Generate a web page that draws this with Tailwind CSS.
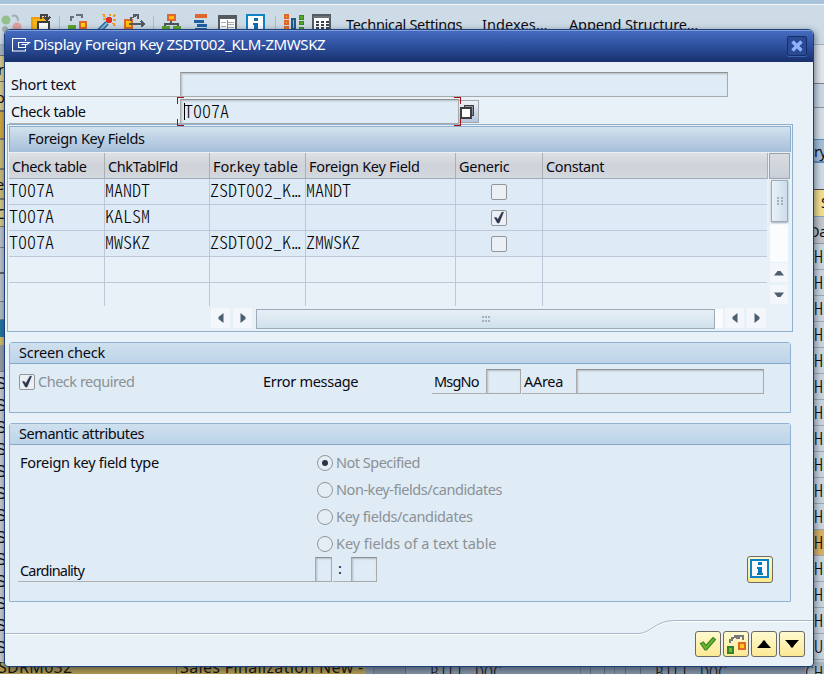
<!DOCTYPE html>
<html lang="en">
<head>
<meta charset="utf-8">
<title>Display Foreign Key ZSDT002_KLM-ZMWSKZ</title>
<script src="https://cdn.jsdelivr.net/npm/@tailwindcss/browser@4"></script>
</head>
<body class="relative h-[674px] w-[824px] overflow-hidden bg-[#c5d0da] font-['Noto_Sans',sans-serif] text-[14.5px] leading-[20px] tracking-[-0.3px] text-[#0a0a12]">

<!-- main window behind the dialog -->
<div class="flex h-[674px] flex-col overflow-hidden">
  <div class="h-1 shrink-0 bg-[#a9c3db]"></div>
  <div class="h-px shrink-0 bg-[#f4f8fb]"></div>
  <div class="flex h-[40px] shrink-0 items-start border-b border-[#9fb0bf] bg-[#cddbe6] pt-[9px]">
    <svg class="shrink-0" width="340" height="18" viewBox="0 14 340 18" shape-rendering="crispEdges">
      <g shape-rendering="auto"><circle cx="6" cy="20" r="4.5" fill="#93c08c"/><circle cx="17" cy="27" r="4.5" fill="#e0a09b"/><circle cx="5" cy="29" r="3" fill="#a3adb3"/><path d="M12 16q6-2 6 5" fill="none" stroke="#a3adb3" stroke-width="2"/></g>
      <rect x="31" y="17" width="16" height="16" fill="#f6b716"/><path d="M31 17h13v2h-11v12h-2z" fill="#ee9d12"/><rect x="38" y="22" width="11" height="10" fill="#fff" stroke="#3d3d3d" stroke-width="2"/><path d="M41 19v-4h6v4m-3-2l3 3 3-3" fill="none" stroke="#444" stroke-width="1.5"/>
      <path d="M59 16v16" stroke="#a6bccd"/>
      <g><rect x="68" y="25" width="8" height="8" fill="#5aa52a"/><path d="M71 21v-4h3m2-2h6v3" fill="none" stroke="#67717a" stroke-width="2"/><rect x="80" y="22" width="6" height="6" fill="#fdd20a" stroke="#e0662a" stroke-width="2"/></g>
      <path d="M99 31l8-8" stroke="#24699a" stroke-width="5" shape-rendering="auto"/><path d="M100 30l7-7" stroke="#86b7d6" stroke-width="2" shape-rendering="auto"/><circle cx="109" cy="20" r="3" fill="#e02b26"/><path d="M103 14l2 3m5-3v2m5-1l-2 2m0 3h3m-3 3l2 3m-12-7h3" stroke="#f29a1e" stroke-width="2"/>
      <rect x="125" y="20" width="7" height="8" fill="#fdc50a" stroke="#e0662a" stroke-width="2"/><path d="M129 24h14M131 21v-3l5-2m-3-1h5v4m3 2l3 3-3 3" fill="none" stroke="#555a60" stroke-width="1.600"/>
      <path d="M153 16v16" stroke="#a6bccd"/>
      <rect x="168" y="15" width="7" height="5" fill="#fdb81a" stroke="#e0662a" stroke-width="2"/><path d="M171 21v3m-6 2v-2h13v2" fill="none" stroke="#4e555a" stroke-width="2"/><rect x="162" y="26" width="8" height="5" fill="#5aa52a"/><rect x="173" y="26" width="8" height="5" fill="#5aa52a"/>
      <rect x="195" y="14" width="12" height="4" fill="#e0662a"/><path d="M194 21h10m-7 4h10m-12 4h12" stroke="#1f5fa0" stroke-width="3"/>
      <rect x="219" y="16" width="17" height="16" fill="#fff" stroke="#565b60" stroke-width="2"/><path d="M219 18h17" stroke="#565b60" stroke-width="2"/><path d="M221 22h5m2 0h6m-13 4h5m2-2h6m-6 3h6" stroke="#a9aeb3"/><path d="M227 20v12" stroke="#888"/>
      <rect x="247" y="15" width="17" height="18" fill="#fff" stroke="#0d83c4" stroke-width="2"/><path d="M254 18h4v3h-4zM253 23h5v8h-4v-6h-1z" fill="#0a6fb0"/>
      <path d="M275 16v16" stroke="#a6bccd"/>
      <path d="M285 15h3v3h-3zM285 21h3v3h-3zM285 27h3v3h-3z" fill="#fdc03a" stroke="#e0662a" stroke-width="2"/><rect x="292" y="19" width="3" height="10" fill="#79b8e6" stroke="#225b85" stroke-width="2"/><path d="M299 15h4v4h-4zM299 21h4v3h-4zM299 27h4v3h-4z" fill="#5aa52a" stroke="#3a8526"/>
      <rect x="313" y="15" width="17" height="18" fill="#fff" stroke="#565b60" stroke-width="2"/><path d="M313 17h17" stroke="#6b7278" stroke-width="2"/><path d="M317 21v10m5-10v10m5-10v10" stroke="#39444d" stroke-width="3" stroke-dasharray="2 1"/>
    </svg>
    <div class="flex gap-[20px] whitespace-nowrap pl-[6px] tracking-[-0.3px]">
      <span class="w-[116px]">Technical Settings</span><span class="w-[67px] tracking-[0.1px]">Indexes…</span><span class="tracking-[-0.15px]">Append Structure…</span>
    </div>
  </div>
  <div class="flex h-[617px] shrink-0 overflow-hidden">
    <!-- left edge of the main window -->
    <div class="flex h-full w-[400px] flex-col overflow-hidden">
      <div class="h-[10px] shrink-0 bg-[#aab6c2]"></div>
      <div class="h-[27px] shrink-0 border-y border-[#6f6f68] bg-[#d9ca8a] leading-[27px]"><span class="-ml-0.5">r</span></div>
      <div class="h-[30px] shrink-0 border-b-2 border-[#6f6f68] bg-[#d9ca8a] leading-[30px]"><span class="-ml-1">o</span></div>
      <div class="h-[28px] shrink-0 border-b-2 border-[#7a7768] bg-[#d3a93f]"></div>
      <div class="h-[30px] shrink-0 border-b-2 border-[#7a7768] bg-[#cdbc78]"></div>
      <div class="h-[30px] shrink-0 border-b-2 border-[#7a7768] bg-[#cdbc78] leading-[28px]"><span class="-ml-1">e</span></div>
      <div class="h-[27px] shrink-0 border-b border-[#7a7768] bg-[#d9ca8a] leading-[26px]"><span class="-ml-1">C</span></div>
      <div class="h-[21px] shrink-0 border-b border-[#777f88] bg-[#bcc3cb]"></div>
      <div class="h-[26px] shrink-0 border-b-2 border-[#5d646b] bg-[#bcc3cb]"></div>
      <div class="h-[28px] shrink-0 border-b border-[#777f88] bg-[#bcc3cb]"></div>
      <div class="h-[18px] shrink-0 border-b border-[#777f88] bg-[#b4bdc6]"></div>
      <div class="h-[17px] shrink-0 bg-[#23749f]"></div>
      <div class="h-[8px] shrink-0 bg-[#d3bd62]"></div>
      <div class="h-[27px] shrink-0 border-b border-[#777f88] bg-[#979da5]"></div>
      <div id="codes" class="flex h-[290px] shrink-0 flex-col overflow-hidden bg-[#c6cbd1] pt-px font-['Liberation_Sans',sans-serif]"></div>
    </div>
    <!-- right part of the main window -->
    <div class="flex h-full w-[424px] flex-col overflow-hidden whitespace-nowrap bg-[#c5d0da]">
      <div class="h-[39px] shrink-0 border-b border-[#7a8086] bg-[#dfe5ea]"></div>
      <div class="h-[24px] shrink-0 border-b border-[#8b9197] bg-[#c9d8e4]"></div>
      <div class="h-[31px] shrink-0 bg-[#d3dde5]"></div>
      <div class="h-[24px] shrink-0 border-b-2 border-t border-[#5f8db8] bg-[#a3bfd8] pl-[409px] leading-[23px]">try</div>
      <div class="h-[27px] shrink-0 border-b border-[#5a4a48] bg-[#cdd9e4]"></div>
      <div class="h-[27px] shrink-0 border-b border-[#7fa4c6] bg-[#f4dd8c] pl-[421px] leading-[24px]">S</div>
      <div class="h-[27px] shrink-0 border-b border-[#9098a2] bg-[#c2c5ca] pl-[409px] leading-[28px]">Da</div>
      <div id="types" class="flex flex-col"></div>
    </div>
  </div>
  <!-- last visible table line -->
  <div class="flex h-[12px] shrink-0 overflow-hidden whitespace-nowrap bg-[#8593a3] text-[#14120c]">
    <div class="w-[177px] shrink-0 border-r border-[#6d6032] bg-[#b39c50] text-[16px] leading-[11px] tracking-[0.3px]"><span class="-ml-0.5">SDRM032</span></div>
    <div class="w-[189px] shrink-0 bg-[#b39c50] pl-[3px] text-[16px] leading-[11px] tracking-[0.35px]">Sales Finalization New -</div>
    <div class="w-[8px] shrink-0 border-r border-[#6c7989]"></div><div class="w-[32px] shrink-0 border-r border-[#5f6c7c] bg-[#7e8b99]"></div>
    <div class="w-[175px] shrink-0 border-r border-[#6c7989] pl-[24px] font-['Noto_Sans_CJK_KR',sans-serif] text-[18px] font-light leading-[18px] tracking-[0] [font-feature-settings:'hwid']">BILL_DOC</div>
    <div class="w-[10px] shrink-0 border-r border-[#5f6c7c]"></div><div class="w-[14px] shrink-0 border-r border-[#5f6c7c]"></div><div class="w-[10px] shrink-0 border-r border-[#6c7989]"></div><div class="w-[11px] shrink-0 border-r border-[#5f6c7c]"></div><div class="w-[15px] shrink-0 border-r border-[#5f6c7c]"></div>
    <div class="w-[164px] shrink-0 pl-[14px] font-['Noto_Sans_CJK_KR',sans-serif] text-[18px] font-light leading-[18px] tracking-[0] [font-feature-settings:'hwid']">BILL_DOC</div>
    <div class="grow bg-[#aab6c3] font-['Noto_Sans_CJK_KR',sans-serif] text-[18px] font-light leading-[18px] tracking-[0] [font-feature-settings:'hwid']">CH</div>
  </div>
</div>

<!-- dialog -->
<div class="absolute left-[4px] top-[29px] flex h-[638px] w-[810px] flex-col overflow-hidden rounded-[6px] rounded-b-[4px] border border-[#1f3f7c] bg-[#e8f0f8] shadow-[1px_2px_7px_rgba(20,35,60,0.6)]">
  <div class="flex h-[32px] shrink-0 items-center border-t border-[#7f9fd8] bg-linear-to-b from-[#456ac0] via-[#2d4f9c] to-[#17306c] pl-[7px] pr-[6px]">
    <svg class="mb-[4px]" width="19" height="14" viewBox="0 0 19 14" fill="none" stroke="#fff" stroke-width="1.1"><path d="M13.500 3V.5H.5v12.500h13V11"/><path d="M6.500 4.500H17.500L15 6.500H13.500V9.500H6.500zM9.500 6.500H13.500"/></svg>
    <span class="mb-[5px] ml-[2px] grow text-[15px] tracking-[-0.4px] text-white">Display Foreign Key ZSDT002_KLM-ZMWSKZ</span>
    <div class="mb-[2px] flex size-[20px] items-center justify-center rounded-[2px] border border-[#122f6b] bg-[#2a4a94] shadow-[0_1px_0_#4163b4]">
      <svg class="shrink-0" width="12" height="12" viewBox="0 0 12 12"><path d="M1.500 1.500l9 9M10.500 1.500l-9 9" stroke="#8fb2ff" stroke-width="3.400"/></svg>
    </div>
  </div>

  <!-- table identification -->
  <div class="mt-[10px] flex h-[25px] shrink-0 pl-[4px]">
    <div class="w-[171px] border-b border-[#b0b0b0] pl-[2px] leading-[25px] tracking-[-0.2px]">Short text</div>
    <div class="h-[25px] w-[548px] border border-[#a9a9a9] border-t-[#909090] bg-[#dfecf5] shadow-[inset_1px_1px_2px_rgba(90,100,110,0.35)]"></div>
  </div>
  <div class="mt-[2px] flex h-[25px] shrink-0 pl-[4px]">
    <div class="w-[171px] border-b border-[#b0b0b0] pl-[2px] leading-[25px] tracking-[-0.4px]">Check table</div>
    <div class="relative h-[25px] w-[279px] border border-[#a9a9a9] border-t-[#909090] bg-[#dfecf5] pl-[3px] font-['Noto_Sans_CJK_KR',sans-serif] text-[18px] font-light leading-[21px] tracking-[0] text-black shadow-[inset_1px_1px_2px_rgba(90,100,110,0.35)] [font-feature-settings:'hwid']">
      <span>T007A</span>
      <span class="absolute left-[3px] top-[3px] h-[17px] w-px bg-black"></span>
      <svg class="absolute -left-[4px] -top-[3px] z-10" width="286" height="29" viewBox="0 0 286 29" fill="none" stroke="#a01018" shape-rendering="crispEdges"><path d="M6.500 .5H.5V7M.5 22V28.500H6.500M277 .5h6.500V7M283.500 22V28.500H277"/></svg>
    </div>
    <div class="mt-px flex h-[23px] w-[20px] items-center justify-start border border-l-0 border-[#a4a8ac] bg-linear-to-b from-[#eef3f8] to-[#b4c5de] pl-px">
      <svg width="14" height="14" viewBox="0 0 14 14" shape-rendering="crispEdges" fill="#fff" stroke="#3e3e3e"><path d="M4 2V.5H13.500V10H12" fill="none"/><path d="M4 1.500H12.500V10" stroke-opacity=".5" fill="none"/><rect x="1" y="3" width="10" height="10" stroke-width="2"/></svg>
    </div>
  </div>

  <!-- foreign key fields -->
  <div class="ml-[2px] h-[208px] w-[786px] shrink-0 border border-[#8fb0cc] pl-px pt-px">
    <div class="h-[26px] w-[782px] border border-b-0 border-[#8eaecb] bg-linear-to-b from-[#d3e2ee] to-[#a6bfd9] pl-[18px] leading-[22px] tracking-[-0.33px]">Foreign Key Fields</div>
    <div class="mt-px flex">
      <div class="w-[760px]">
        <div class="grid h-[26px] w-[759px] grid-cols-[96px_105px_96px_150px_87px_225px] border-b border-[#a3acb8] bg-linear-to-b from-[#dde1e3] via-[#cfd2d9] to-[#d3d8de] leading-[26px] *:whitespace-nowrap *:border-r *:border-[#a8b0b8] *:pl-[3px]">
          <div class="tracking-[-0.4px]">Check table</div><div class="tracking-[-0.4px]">ChkTablFld</div><div class="tracking-[0]">For.key table</div><div>Foreign Key Field</div><div>Generic</div><div class="tracking-[-0.4px]">Constant</div>
        </div>
        <div id="rows" class="h-[127px] overflow-hidden font-['Noto_Sans_CJK_KR',sans-serif] text-[18px] font-light tracking-[0] text-black [font-feature-settings:'hwid']"></div>
      </div>
      <div class="flex w-[22px] flex-col">
        <div class="h-[26px] w-[21px] border border-[#9ba4ad] bg-linear-to-b from-[#d9dde0] to-[#caced8]"></div>
        <div class="ml-px mt-px h-[82px] w-[18px] bg-[#fbfcfd]">
          <div class="ml-px flex h-[42px] items-center justify-center border border-[#9cabbb] bg-linear-to-r from-[#eaf2f9] to-[#cbdceb] shadow-[0_1px_2px_#9aa5b0]">
            <svg width="6" height="8" fill="#a3b0bd"><path d="M0 0h2v2H0zM4 0h2v2H4zM0 3h2v2H0zM4 3h2v2H4zM0 6h2v2H0zM4 6h2v2H4z"/></svg>
          </div>
        </div>
        <div class="ml-px mt-px flex h-[19px] w-[18px] items-center justify-center bg-[#f3f7fb]"><svg width="10" height="6"><path d="M0 5.500L3.500 1h3L10 5.500z" fill="#4c5f70"/></svg></div>
        <div class="ml-px mt-[3px] flex h-[19px] w-[18px] items-center justify-center bg-[#f3f7fb]"><svg width="10" height="6"><path d="M0 .5L3.500 5h3L10 .5z" fill="#4c5f70"/></svg></div>
      </div>
    </div>
    <div class="mt-[3px] flex h-[19px] pl-[202px]">
      <div class="-mt-px flex w-[19px] items-center justify-center bg-[#f3f7fb]"><svg width="6" height="10"><path d="M5.500 0L.5 4v2l5 4z" fill="#4c5f70"/></svg></div>
      <div class="-mt-px ml-[3px] flex w-[19px] items-center justify-center bg-[#f3f7fb]"><svg width="6" height="10"><path d="M.5 0l5 4v2l-5 4z" fill="#4c5f70"/></svg></div>
      <div class="ml-[4px] flex h-[20px] w-[459px] items-center justify-center border border-[#9cabbb] bg-linear-to-b from-[#e8eff6] to-[#d0e1ec]">
        <svg width="8" height="6" fill="#a3b0bd"><path d="M0 0h2v2H0zM3 0h2v2H3zM6 0h2v2H6zM0 4h2v2H0zM3 4h2v2H3zM6 4h2v2H6z"/></svg>
      </div>
      <div class="w-[8px] bg-[#fbfcfd]"></div>
      <div class="-mt-px ml-[2px] flex w-[19px] items-center justify-center bg-[#f3f7fb]"><svg width="6" height="10"><path d="M5.500 0L.5 4v2l5 4z" fill="#4c5f70"/></svg></div>
      <div class="-mt-px ml-[3px] flex w-[19px] items-center justify-center bg-[#f3f7fb]"><svg width="6" height="10"><path d="M.5 0l5 4v2l-5 4z" fill="#4c5f70"/></svg></div>
    </div>
  </div>

  <!-- screen check -->
  <div class="ml-[4px] mt-[10px] h-[71px] w-[782px] shrink-0 rounded-t-[3px] border border-[#92b1d0] bg-[#dfebf5]">
    <div class="h-[21px] border-b border-[#86a8c8] bg-linear-to-b from-[#cfe0ee] to-[#bcd4e9] pl-[9px] leading-[18px] tracking-[-0.2px]">Screen check</div>
    <div class="mt-[5px] flex h-[25px] items-stretch pl-[9px] leading-[25px]">
      <div class="mt-[5px] size-[16px] rounded-[2px] border-[1.5px] border-[#959595] bg-[#eaf0f6]"><svg class="-mt-px" width="14" height="14" viewBox="0 0 14 14"><path d="M2.500 7.500l2 .2 1.300 2L10 2.200h1.500L7 13H5.500z" fill="#2c3248" stroke="#2c3248" stroke-width=".6"/></svg></div>
      <span class="w-[225px] pl-[3px] tracking-[-0.48px] text-[#8c9196]">Check required</span>
      <span class="w-[172px] pl-[3px]">Error message</span>
      <span class="w-[54px] border-b border-[#b0b0b0] pl-[2px] tracking-[-0.8px]">MsgNo</span>
      <div class="w-[35px] border border-[#a9a9a9] border-t-[#909090] shadow-[inset_1px_1px_2px_rgba(90,100,110,0.35)]"></div>
      <span class="ml-px w-[54px] border-b border-[#b0b0b0] pl-[2px]">AArea</span>
      <div class="w-[188px] border border-[#a9a9a9] border-t-[#909090] shadow-[inset_1px_1px_2px_rgba(90,100,110,0.35)]"></div>
    </div>
  </div>

  <!-- semantic attributes -->
  <div class="ml-[4px] mt-[10px] h-[179px] w-[782px] shrink-0 rounded-t-[3px] border border-[#92b1d0] bg-[#dfebf5]">
    <div class="h-[21px] border-b border-[#86a8c8] bg-linear-to-b from-[#cfe0ee] to-[#bcd4e9] pl-[9px] leading-[18px] tracking-[-0.43px]">Semantic attributes</div>
    <div class="mt-[4px] flex h-[108px]">
      <div class="w-[307px] pl-[10px] leading-[27px]">Foreign key field type</div>
      <div id="options" class="flex flex-col text-[#8c9196]"></div>
    </div>
    <div class="flex items-start pl-[8px] leading-[26px]">
      <div class="h-[25px] w-[297px] border-b border-[#b0b0b0] pl-[2px] tracking-[-0.8px]">Cardinality</div>
      <div class="h-[25px] w-[17px] border border-[#a9a9a9] border-t-[#909090] shadow-[inset_1px_1px_2px_rgba(90,100,110,0.35)]"></div>
      <div class="ml-px h-[25px] w-[18px] border-b border-[#b0b0b0] pl-[5px] leading-[23px]">:</div>
      <div class="h-[25px] w-[26px] border border-[#a9a9a9] border-t-[#909090] shadow-[inset_1px_1px_2px_rgba(90,100,110,0.35)]"></div>
      <div class="ml-[370px] -mt-px flex h-[27px] w-[26px] justify-center rounded-[3px] border-[1.5px] border-[#6c6a62] bg-linear-to-b from-[#fff6c8] to-[#fce78e] pt-px">
        <svg class="shrink-0" width="20" height="20" viewBox="0 0 20 20" shape-rendering="crispEdges"><rect x="1" y="2" width="17" height="17" fill="#fff" stroke="#0d83c4" stroke-width="2"/><path d="M8 4h4v3H8zM7 9h5v6h1v2H7v-2h1v-4H7z" fill="#0a78bc"/></svg>
      </div>
    </div>
  </div>

  <!-- footer buttons -->
  <div class="relative mt-[17px] h-[47px] shrink-0">
    <svg class="absolute left-0 top-0" width="808" height="17" viewBox="0 0 808 17" fill="none"><path d="M0 15.500H633C646 15.500 650 2.500 670 2.500H808" stroke="#fff"/><path d="M0 14.500H633C646 14.500 650 1.500 670 1.500H808" stroke="#aab4ca"/></svg>
    <div class="relative flex justify-end gap-[2px] pr-[8px] pt-[12px] *:flex *:size-[26px] *:items-center *:justify-center *:rounded-[3px] *:border-[1.5px] *:border-[#6c6a62] *:bg-linear-to-b *:from-[#fffacf] *:to-[#fce994]">
      <div><svg width="18" height="16" viewBox="0 0 18 16"><path d="M1.500 7.500L4.500 6 7 9.500 14 1.500 16.500 3.500 7.500 14H6z" fill="#6cb52d" stroke="#3d8526" stroke-width="1.200"/></svg></div>
      <div><svg class="shrink-0" width="20" height="20" viewBox="0 0 20 20" shape-rendering="crispEdges"><rect x="2" y="13" width="5" height="6" fill="#84b51a" stroke="#2f8136" stroke-width="2"/><rect x="13" y="9" width="6" height="6" fill="#fdc816" stroke="#e0662a" stroke-width="2"/><path d="M4 9V6h2V4h2M9 4V2h2v2h2V2h4v4" fill="none" stroke="#77797c" stroke-width="1.500"/></svg></div>
      <div><svg width="14" height="8"><path d="M0 8L5 2.500 6 .5h2l1 2 5 5.500z" fill="#000"/></svg></div>
      <div><svg width="14" height="8"><path d="M0 0h14L9 5.500 8 7.500H6L5 5.500z" fill="#000"/></svg></div>
    </div>
  </div>
</div>

<script>
  const rows = [
    ['T007A', 'MANDT', 'ZSDT002_K...', 'MANDT', false],
    ['T007A', 'KALSM', '', '', true],
    ['T007A', 'MWSKZ', 'ZSDT002_K...', 'ZMWSKZ', false],
    null, null
  ];
  const cell = t => `<div class="overflow-hidden whitespace-nowrap border-r border-[#bcc8d8]">${t.replace('...', '<span class="[font-feature-settings:normal] tracking-[-1.5px]">...</span>')}</div>`;
  const tick = '<svg class="-mt-px" width="14" height="14" viewBox="0 0 14 14"><path d="M2.500 7.500l2 .2 1.300 2L10 2.200h1.500L7 13H5.500z" fill="#2c3248" stroke="#2c3248" stroke-width=".6"/></svg>';
  document.getElementById('rows').innerHTML = rows.map(r => {
    const d = r || ['', '', '', ''];
    const box = r ? `<span class="block size-[16px] rounded-[2px] border-[1.5px] border-[#959595] bg-[#eaf0f6]">${r[4] ? tick : ''}</span>` : '';
    return `<div class="grid h-[26px] w-[758px] grid-cols-[96px_105px_96px_150px_87px_224px] border-b border-[#bcc8d8] leading-[21px] ${r ? 'bg-[#deebf6]' : 'bg-[#e8f0f8]'}">`
      + d.slice(0, 4).map(cell).join('')
      + `<div class="flex items-center justify-center border-r border-[#bcc8d8]">${box}</div><div></div></div>`;
  }).join('');

  const options = [
    ['Not Specified', 'tracking-[-0.5px]'],
    ['Non-key-fields/candidates', 'tracking-[-0.45px]'],
    ['Key fields/candidates', 'tracking-[-0.35px]'],
    ['Key fields of a text table', 'tracking-[-0.05px]']
  ];
  document.getElementById('options').innerHTML = options.map(([t, track], i) =>
    `<div class="flex h-[27px] items-center"><span class="flex size-[16px] items-center justify-center rounded-full border-[1.5px] border-[#959595] bg-[#e6eef5]">${i ? '' : '<i class="size-[6px] rounded-full bg-[#2c3248]"></i>'}</span><span class="pb-[2px] pl-[3px] ${track}">${t}</span></div>`).join('');

  document.getElementById('codes').innerHTML =
    Array.from({ length: 13 }, () => '<div class="h-[22px] shrink-0 -ml-[5px] text-[17px] leading-[22px]">S</div>').join('');

  document.getElementById('types').innerHTML =
    Array.from({ length: 16 }, (_, i) =>
      `<div class="h-[26px] shrink-0 border-b border-[#9ba6b4] pl-[414px] font-['Noto_Sans_CJK_KR',sans-serif] text-[18px] font-light leading-[23px] tracking-[0] text-black [font-feature-settings:'hwid'] ${i === 11 ? 'bg-[#d9b064]' : 'bg-[#c9d4de]'}">${i === 15 ? 'U' : 'H'}</div>`).join('');
</script>
</body>
</html>
